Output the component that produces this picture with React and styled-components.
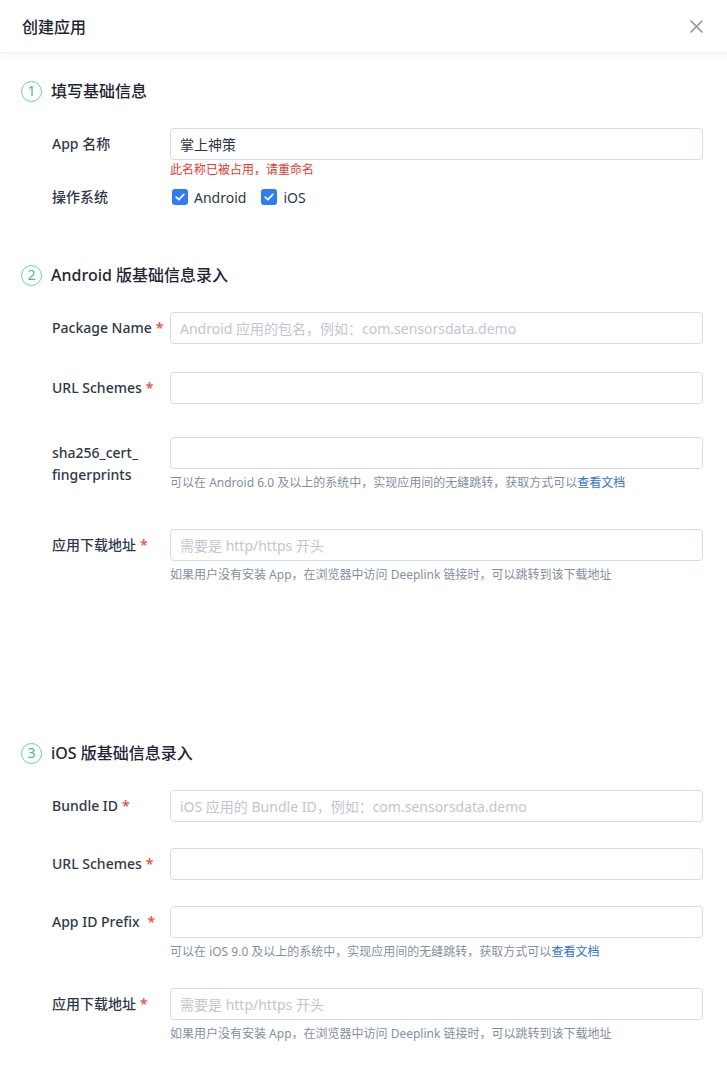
import React from "react"
import styled, { createGlobalStyle } from "styled-components"

const GlobalStyle = createGlobalStyle`
  html, body {
    margin: 0;
    padding: 0;
    background: #fff;
  }
  body {
    font-family: "Noto Sans", "Noto Sans CJK SC", sans-serif;
    color: #2b3445;
  }
`

const Modal = styled.div`
  width: 727px;
  min-height: 1085px;
  background: #fff;
`

const Header = styled.header`
  height: 53px;
  padding: 0 22px;
  display: flex;
  align-items: center;
  justify-content: space-between;
  box-shadow: 0 2px 6px rgba(30, 45, 70, 0.06);
  border-bottom: 1px solid #f1f3f6;
  box-sizing: border-box;
`

const Title = styled.h1`
  margin: 0;
  font-size: 16px;
  font-weight: 500;
  color: #1f2633;
`

const Close = styled.button`
  border: 0;
  background: none;
  padding: 0;
  margin-right: 2px;
  width: 14px;
  height: 14px;
  display: flex;
  align-items: center;
  justify-content: center;
  cursor: pointer;
`

const Body = styled.div`
  padding: 27px 24px 40px 22px;
`

const Section = styled.section`
  margin-top: ${(p) => p.$mt || 0}px;
`

const SectionHead = styled.div`
  display: flex;
  align-items: center;
  gap: 10px;
  height: 22px;
`

const Step = styled.span`
  width: 19px;
  height: 19px;
  border: 1px solid #63d3a3;
  border-radius: 50%;
  color: #3cbf88;
  font-size: 14px;
  line-height: 1;
  display: flex;
  align-items: center;
  justify-content: center;
  margin-left: -1px;
  margin-right: -1px;
`

const SectionTitle = styled.h2`
  margin: 0;
  font-size: 16px;
  font-weight: 500;
  color: #1f2633;
  line-height: 22px;
`

const Item = styled.div`
  display: flex;
  margin-top: ${(p) => p.$mt}px;
  padding-left: 30px;
`

const Label = styled.label`
  width: 118px;
  flex-shrink: 0;
  padding-top: 5px;
  font-size: 14px;
  line-height: 22px;
  font-weight: 500;
  color: #2f3849;
  white-space: pre-line;
`

const Star = styled.span`
  color: #f0483c;
  margin-left: ${(p) => p.$gap || 4}px;
`

const Control = styled.div`
  flex: 1;
  min-width: 0;
`

const Input = styled.input`
  display: block;
  width: 100%;
  height: 32px;
  box-sizing: border-box;
  border: 1px solid #d6dce6;
  border-radius: 4px;
  padding: 0 9px;
  font-family: inherit;
  font-size: 14px;
  color: #2b3445;
  outline: none;
  background: #fff;
  &::placeholder {
    color: #bfc6d2;
  }
`

const Error = styled.div`
  margin-top: 1px;
  font-size: 12px;
  line-height: 18px;
  color: #e8392e;
`

const Help = styled.div`
  margin-top: 5px;
  font-size: 12px;
  line-height: 18px;
  color: #858f9f;
  a {
    color: #2f6fe0;
    text-decoration: none;
  }
`

const Checks = styled.div`
  height: 32px;
  display: flex;
  align-items: center;
  gap: 15px;
  padding-left: 2px;
`

const Check = styled.label`
  display: flex;
  align-items: center;
  gap: 6px;
  font-size: 14px;
  color: #2f3849;
`

const Box = styled.span`
  width: 16px;
  height: 16px;
  border-radius: 3px;
  background: #2f7df6;
  display: flex;
  align-items: center;
  justify-content: center;
`

const CheckItem = ({ children }) => (
  <Check>
    <Box>
      <svg width="10" height="8" viewBox="0 0 10 8">
        <path d="M1.2 4.1 L3.9 6.6 L8.8 1.4" fill="none" stroke="#fff" strokeWidth="1.7" strokeLinecap="round" strokeLinejoin="round" />
      </svg>
    </Box>
    {children}
  </Check>
)

const Field = ({ label, required, starGap, mt, placeholder, value, help, error }) => (
  <Item $mt={mt}>
    <Label>
      {label}
      {required && <Star $gap={starGap}>*</Star>}
    </Label>
    <Control>
      <Input placeholder={placeholder} defaultValue={value} />
      {error && <Error>{error}</Error>}
      {help && <Help>{help}</Help>}
    </Control>
  </Item>
)

const jumpHelp = (os) => (
  <>
    可以在 {os} 及以上的系统中，实现应用间的无缝跳转，获取方式可以<a href="#">查看文档</a>
  </>
)

const downloadHelp = "如果用户没有安装 App，在浏览器中访问 Deeplink 链接时，可以跳转到该下载地址"

const App = () => (
  <Modal>
    <GlobalStyle />
    <Header>
      <Title>创建应用</Title>
      <Close aria-label="关闭">
        <svg width="13" height="13" viewBox="0 0 13 13">
          <path d="M1 1 L12 12 M12 1 L1 12" stroke="#8a94a4" strokeWidth="1.6" strokeLinecap="round" />
        </svg>
      </Close>
    </Header>
    <Body>
      <Section>
        <SectionHead>
          <Step>1</Step>
          <SectionTitle>填写基础信息</SectionTitle>
        </SectionHead>
        <Field mt={26} label="App 名称" value="掌上神策" error="此名称已被占用，请重命名" />
        <Item $mt={2}>
          <Label>操作系统</Label>
          <Checks>
            <CheckItem>Android</CheckItem>
            <CheckItem>iOS</CheckItem>
          </Checks>
        </Item>
      </Section>

      <Section $mt={51}>
        <SectionHead>
          <Step>2</Step>
          <SectionTitle>Android 版基础信息录入</SectionTitle>
        </SectionHead>
        <Field mt={26} label="Package Name" required placeholder="Android 应用的包名，例如：com.sensorsdata.demo" />
        <Field mt={28} label="URL Schemes" required />
        <Field mt={33} label={"sha256_cert_\nfingerprints"} help={jumpHelp("Android 6.0")} />
        <Field mt={37} label="应用下载地址" required placeholder="需要是 http/https 开头" help={downloadHelp} />
      </Section>

      <Section $mt={158}>
        <SectionHead>
          <Step>3</Step>
          <SectionTitle>iOS 版基础信息录入</SectionTitle>
        </SectionHead>
        <Field mt={26} label="Bundle ID" required placeholder="iOS 应用的 Bundle ID，例如：com.sensorsdata.demo" />
        <Field mt={26} label="URL Schemes" required />
        <Field mt={26} label="App ID Prefix" required starGap={8} help={jumpHelp("iOS 9.0")} />
        <Field mt={27} label="应用下载地址" required placeholder="需要是 http/https 开头" help={downloadHelp} />
      </Section>
    </Body>
  </Modal>
)

export default App
